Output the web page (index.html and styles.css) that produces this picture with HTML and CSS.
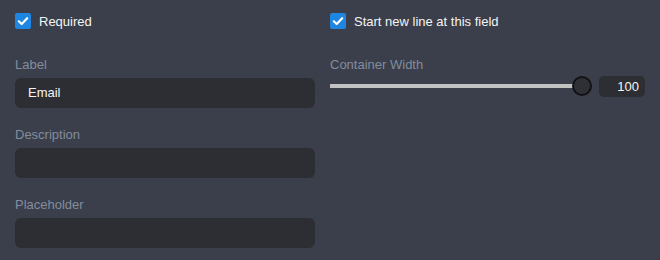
FILE: index.html
```html
<!DOCTYPE html>
<html>
<head>
<meta charset="utf-8">
<link rel="stylesheet" href="styles.css">
</head>
<body>
<div class="panel">
  <div class="col col-left">
    <div class="check-row">
      <span class="checkbox"><svg viewBox="0 0 16 16" width="16" height="16"><path d="M3.8 8.3 L6.7 11 L12.2 5.2" fill="none" stroke="#fff" stroke-width="2.2" stroke-linecap="round" stroke-linejoin="round"/></svg></span>
      <span class="check-text">Required</span>
    </div>
    <div class="field first">
      <div class="field-label">Label</div>
      <div class="input">Email</div>
    </div>
    <div class="field">
      <div class="field-label">Description</div>
      <div class="input"></div>
    </div>
    <div class="field">
      <div class="field-label">Placeholder</div>
      <div class="input"></div>
    </div>
  </div>
  <div class="col col-right">
    <div class="check-row">
      <span class="checkbox"><svg viewBox="0 0 16 16" width="16" height="16"><path d="M3.8 8.3 L6.7 11 L12.2 5.2" fill="none" stroke="#fff" stroke-width="2.2" stroke-linecap="round" stroke-linejoin="round"/></svg></span>
      <span class="check-text">Start new line at this field</span>
    </div>
    <div class="field first">
      <div class="field-label">Container Width</div>
      <div class="slider-row">
        <div class="track"></div>
        <div class="thumb"></div>
        <div class="num">100</div>
      </div>
    </div>
  </div>
</div>
</body>
</html>
```
FILE: styles.css
```css
html, body {
  margin: 0;
  padding: 0;
  background: #3a3f4b;
  width: 660px;
  height: 260px;
  overflow: hidden;
}
body {
  font-family: "Liberation Sans", Arial, sans-serif;
  font-size: 13px;
  color: #f2f2f2;
}
.panel {
  display: grid;
  grid-template-columns: 300px 315px;
  column-gap: 15px;
  padding: 13px 15px 0 15px;
}
.check-row {
  display: flex;
  align-items: flex-start;
  gap: 8px;
  height: 16px;
}
.checkbox {
  width: 16px;
  height: 16px;
  border-radius: 2px;
  background: #1e86e0;
  display: block;
  flex: none;
}
.checkbox svg { display: block; }
.check-text {
  line-height: 16px;
  margin-top: 1px;
  color: #f4f4f4;
}
.field { margin-top: 19px; }
.field.first { margin-top: 28px; }
.field-label {
  line-height: 16px;
  color: #838c9d;
  margin-bottom: 5px;
}
.input {
  height: 30px;
  box-sizing: border-box;
  background: #2d2e33;
  border-radius: 6px;
  padding: 0 13px;
  line-height: 30px;
  color: #f4f4f4;
}
.slider-row {
  display: flex;
  align-items: center;
  height: 22px;
  margin-top: -3px;
}
.track {
  flex: 1;
  height: 4px;
  background: #c2c2c2;
}
.thumb {
  width: 16px;
  height: 16px;
  border: 2px solid #111214;
  border-radius: 50%;
  background: #2e3035;
  margin-left: -4px;
  flex: none;
}
.num {
  width: 46px;
  height: 21px;
  box-sizing: border-box;
  margin-left: 7px;
  background: #2d2e33;
  border-radius: 5px;
  text-align: right;
  padding-right: 6px;
  line-height: 21px;
  color: #f4f4f4;
  flex: none;
}
```
